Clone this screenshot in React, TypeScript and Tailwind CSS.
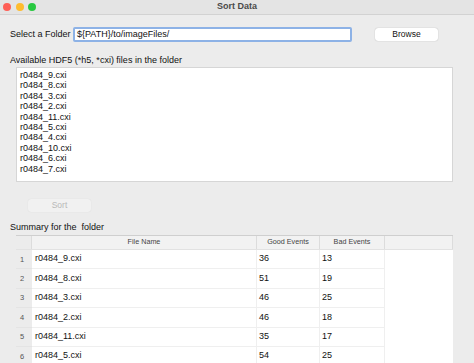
import React from 'react';

const files = [
  'r0484_9.cxi',
  'r0484_8.cxi',
  'r0484_3.cxi',
  'r0484_2.cxi',
  'r0484_11.cxi',
  'r0484_5.cxi',
  'r0484_4.cxi',
  'r0484_10.cxi',
  'r0484_6.cxi',
  'r0484_7.cxi',
];

const summary = [
  { name: 'r0484_9.cxi', good: 36, bad: 13 },
  { name: 'r0484_8.cxi', good: 51, bad: 19 },
  { name: 'r0484_3.cxi', good: 46, bad: 25 },
  { name: 'r0484_2.cxi', good: 46, bad: 18 },
  { name: 'r0484_11.cxi', good: 35, bad: 17 },
  { name: 'r0484_5.cxi', good: 54, bad: 25 },
];

export default function App() {
  return (
    <div
      className="w-[474px] h-[363px] overflow-hidden bg-[#ececec] text-[#111] relative"
      style={{ fontFamily: '"Liberation Sans", Arial, sans-serif' }}
    >
      {/* Title bar */}
      <div className="h-[15px] flex items-center border-b border-[#d2d2d2] bg-[#e4e4e4] relative">
        <div className="flex gap-[4.5px] pl-[3px]">
          <span className="w-[8px] h-[8px] rounded-full bg-[#fe5f57]" />
          <span className="w-[8px] h-[8px] rounded-full bg-[#febc2e]" />
          <span className="w-[8px] h-[8px] rounded-full bg-[#28c840]" />
        </div>
        <div className="absolute inset-0 flex items-center justify-center text-[9px] font-bold text-[#4a4a4a]">
          Sort Data
        </div>
      </div>

      {/* Folder row */}
      <div className="flex items-center mt-[12px] h-[15px] text-[9px]">
        <span className="ml-[10px] w-[63px]">Select a Folder</span>
        <div className="w-[279px] h-[15px] bg-white border-2 border-[#8db2e6] rounded-[2px] flex items-center pl-[2px]">
          ${'{PATH}'}/to/imageFiles/
        </div>
        <button className="ml-[23px] w-[63px] h-[13px] bg-white rounded-[3px] shadow-[0_0_1px_rgba(0,0,0,0.35)] text-[8.5px] flex items-center justify-center">
          Browse
        </button>
      </div>

      {/* File list */}
      <div className="ml-[10px] mt-[13px] text-[9px] leading-[10px]">
        Available HDF5 (*h5, *cxi) files in the folder
      </div>
      <div className="ml-[16px] mt-[2px] w-[437px] h-[115px] bg-white border border-[#d6d6d6] pl-[3px] pt-[2px] text-[9px] leading-[10.4px]">
        {files.map((f) => (
          <div key={f}>{f}</div>
        ))}
      </div>

      <button
        disabled
        className="ml-[28px] mt-[17px] w-[63px] h-[13px] bg-[#f1f1f1] rounded-[3px] shadow-[0_0_1px_rgba(0,0,0,0.12)] text-[8.5px] text-[#b8b8b8] flex items-center justify-center"
      >
        Sort
      </button>

      {/* Summary */}
      <div className="ml-[10px] mt-[10px] text-[9px] leading-[10px]">Summary for the&nbsp; folder</div>
      <div className="ml-[16px] mt-[3px] w-[437px] border-t border-[#cfcfcf] bg-white">
        <div className="flex h-[14px] bg-[#f2f2f2] border-b border-[#e2e2e2] text-[7.2px] text-[#444]">
          <div className="w-[16px] border-r border-[#dcdcdc] bg-[#ececec]" />
          <div className="w-[225px] border-r border-[#dcdcdc] flex items-center justify-center">File Name</div>
          <div className="w-[63px] border-r border-[#dcdcdc] flex items-center justify-center">Good Events</div>
          <div className="w-[65px] border-r border-[#dcdcdc] flex items-center justify-center">Bad Events</div>
          <div className="flex-1 border-r border-[#dcdcdc]" />
        </div>
        {summary.map((r, i) => (
          <div key={r.name} className="flex h-[19.4px] text-[9px]">
            <div className="w-[16px] bg-[#ececec] border-b border-[#e4e4e4] flex items-center pl-[4px] text-[7.5px] text-[#555]">
              {i + 1}
            </div>
            <div className="w-[225px] border-b border-r border-[#efefef] flex items-center pl-[3px]">{r.name}</div>
            <div className="w-[63px] border-b border-r border-[#efefef] flex items-center pl-[2px]">{r.good}</div>
            <div className="w-[65px] border-b border-r border-[#efefef] flex items-center pl-[2px]">{r.bad}</div>
            <div className="flex-1" />
          </div>
        ))}
      </div>
    </div>
  );
}
